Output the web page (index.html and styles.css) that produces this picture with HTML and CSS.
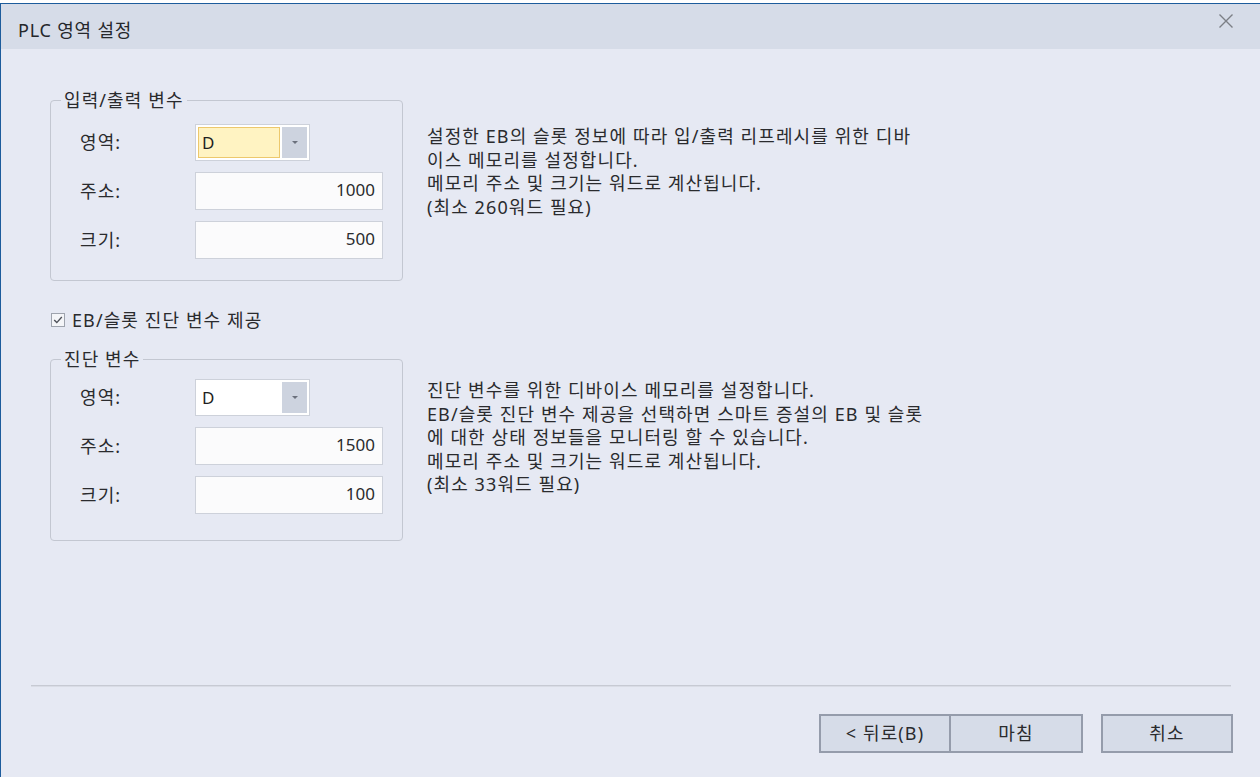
FILE: index.html
```
<html>

<head>
	<meta charset="utf-8">
	<title>PLC 영역 설정</title>
	<link rel="stylesheet" href="styles.css">
</head>

<body>
	<div class="backdrop"></div>
	<div class="window">
		<div class="titlebar">
			<span class="title">PLC 영역 설정</span>
			<svg class="close" width="16" height="16" viewBox="0 0 16 16">
				<path d="M1.5 1.5 L14.5 14.5 M14.5 1.5 L1.5 14.5" stroke="#7c7f86" stroke-width="1.4" fill="none" />
			</svg>
		</div>

		<div class="content">
			<div class="section">
				<fieldset class="group">
					<legend>입력/출력 변수</legend>
					<div class="rows rows-io">
						<div class="row">
							<span class="label">영역:</span>
							<div class="combo">
								<div class="combo-field active">D</div>
								<div class="combo-btn"><span class="arrow"></span></div>
							</div>
						</div>
						<div class="row">
							<span class="label">주소:</span>
							<div class="input">1000</div>
						</div>
						<div class="row">
							<span class="label">크기:</span>
							<div class="input">500</div>
						</div>
					</div>
				</fieldset>
				<p class="desc desc-io">
					설정한 EB의 슬롯 정보에 따라 입/출력 리프레시를 위한 디바<br>
					이스 메모리를 설정합니다.<br>
					메모리 주소 및 크기는 워드로 계산됩니다.<br>
					(최소 260워드 필요)
				</p>
			</div>

			<label class="check">
				<svg class="checkbox" width="14" height="14" viewBox="0 0 14 14">
					<rect x="0.5" y="0.5" width="13" height="13" fill="#f4f5f8" stroke="#9ea3ad" />
					<path d="M3.2 7 L5.8 9.6 L10.8 4" stroke="#4d5058" stroke-width="1.4" fill="none" />
				</svg>
				<span>EB/슬롯 진단 변수 제공</span>
			</label>

			<div class="section">
				<fieldset class="group group-diag">
					<legend>진단 변수</legend>
					<div class="rows rows-diag">
						<div class="row">
							<span class="label">영역:</span>
							<div class="combo">
								<div class="combo-field">D</div>
								<div class="combo-btn"><span class="arrow"></span></div>
							</div>
						</div>
						<div class="row">
							<span class="label">주소:</span>
							<div class="input">1500</div>
						</div>
						<div class="row">
							<span class="label">크기:</span>
							<div class="input">100</div>
						</div>
					</div>
				</fieldset>
				<p class="desc desc-diag">
					진단 변수를 위한 디바이스 메모리를 설정합니다.<br>
					EB/슬롯 진단 변수 제공을 선택하면 스마트 증설의 EB 및 슬롯<br>
					에 대한 상태 정보들을 모니터링 할 수 있습니다.<br>
					메모리 주소 및 크기는 워드로 계산됩니다.<br>
					(최소 33워드 필요)
				</p>
			</div>
		</div>

		<div class="footer">
			<div class="separator"></div>
			<div class="buttons">
				<div class="btn btn-back">&lt; 뒤로(B)</div>
				<div class="btn btn-finish">마침</div>
				<div class="btn btn-cancel">취소</div>
			</div>
		</div>
	</div>
</body>

</html>
```

FILE: styles.css
```
html,
body {
	margin: 0;
	height: 100%;
	overflow: hidden;
}

body {
	background-color: #ffffff;
	font-family: "Noto Sans", "Noto Sans CJK KR", sans-serif;
	font-size: 18px;
	letter-spacing: 1.1px;
	color: #2a2b2e;
}

.backdrop {
	height: 3px;
	background-color: #ffffff;
}

.window {
	height: 774px;
	border-top: 1px solid #1d5c9c;
	border-left: 1px solid #1d5c9c;
	background-color: #e6e9f3;
	display: flex;
	flex-direction: column;
	box-sizing: border-box;
}

.titlebar {
	height: 45px;
	flex-shrink: 0;
	background-color: #d6dce8;
	display: flex;
	align-items: flex-start;
	justify-content: space-between;
	padding: 0 26px 0 17px;
}

.title {
	font-size: 18px;
	letter-spacing: 0.8px;
	line-height: 22px;
	margin-top: 15px;
	color: #25272b;
}

.close {
	margin-top: 9px;
}

.content {
	flex: 1;
	padding: 40px 0 0 49px;
}

.section {
	display: flex;
	align-items: flex-start;
}

.group {
	margin: 0;
	padding: 0;
	width: 353px;
	box-sizing: border-box;
	border: 1px solid #c3c7d1;
	border-radius: 4px;
	flex-shrink: 0;
}

.group legend {
	margin-left: 10px;
	padding: 0 3px;
	line-height: 22px;
}

.rows {
	display: flex;
	flex-direction: column;
	gap: 11px;
	padding: 12px 19px 21px 29px;
}

.rows-diag {
	padding-top: 8px;
	padding-bottom: 26px;
}

.row {
	display: flex;
	align-items: center;
	height: 38px;
}

.label {
	width: 115px;
	line-height: 22px;
}

.combo {
	width: 115px;
	height: 37px;
	box-sizing: border-box;
	border: 1px solid #cdd1da;
	background-color: #ffffff;
	padding: 2px;
	display: flex;
	gap: 2px;
}

.combo-field {
	flex: 1;
	border: 1px solid #ffffff;
	padding-left: 3px;
	font-size: 17px;
	letter-spacing: 0;
	line-height: 29px;
	color: #1e1f22;
}

.combo-field.active {
	border-color: #edc86c;
	background-color: #fff3c2;
}

.combo-btn {
	width: 25px;
	background-color: #cdd3df;
	display: flex;
	align-items: center;
	justify-content: center;
}

.arrow {
	width: 0;
	height: 0;
	border-left: 3px solid transparent;
	border-right: 3px solid transparent;
	border-top: 3px solid #6b707c;
}

.input {
	width: 188px;
	height: 38px;
	box-sizing: border-box;
	border: 1px solid #cdd1da;
	background-color: #fbfbfc;
	text-align: right;
	padding-right: 7px;
	font-size: 17px;
	letter-spacing: 0;
	line-height: 34px;
}

.desc {
	margin: 0 0 0 24px;
	line-height: 23.5px;
}

.desc-io {
	margin-top: 36px;
}

.desc-diag {
	margin-top: 48px;
}

.check {
	display: flex;
	align-items: center;
	gap: 7px;
	margin: 28px 0 0 1px;
	line-height: 22px;
}

.group-diag {
	margin-top: 17px;
}

.footer {
	flex-shrink: 0;
}

.separator {
	height: 2px;
	margin: 0 29px 0 30px;
	background-color: #c7cad3;
	border-bottom: 1px solid #d9dce5;
	box-sizing: border-box;
}

.buttons {
	display: flex;
	justify-content: flex-end;
	padding: 27px 27px 24px 0;
}

.btn {
	width: 132px;
	height: 39px;
	box-sizing: border-box;
	border: 2px solid #959cab;
	background-color: #d6dce8;
	text-align: center;
	line-height: 34px;
	color: #2a2b2e;
}

.btn-finish {
	border-left: none;
	width: 132px;
}

.btn-cancel {
	margin-left: 18px;
}
```
